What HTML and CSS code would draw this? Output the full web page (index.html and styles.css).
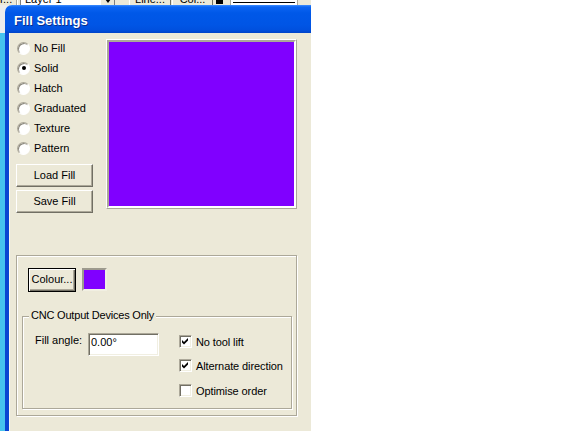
FILE: index.html
```html
<!DOCTYPE html>
<html>
<head>
<meta charset="utf-8">
<link rel="stylesheet" href="styles.css">
</head>
<body>
<div class="screen">
  <div class="toolbar">
    <span class="tb-item tb-lead">r...</span>
    <span class="tb-item tb-sep"></span>
    <div class="tb-item combo"><span class="combo-text">Layer 1</span><span class="combo-btn"><span class="arrow"></span></span></div>
    <div class="tb-item tb-btn tb-line-btn">Line...</div>
    <div class="tb-item tb-btn tb-col-btn">Col...</div>
    <span class="tb-swatch"></span>
    <div class="tb-item tb-field"><span class="tb-rule"></span></div>
  </div>
  <div class="desk">
    <div class="strip"></div>
    <div class="window">
      <div class="titlebar">Fill Settings</div>
      <div class="client">
        <div class="top">
          <div class="left-col">
            <div class="radios">
              <label class="radio"><span class="rb"></span>No Fill</label>
              <label class="radio"><span class="rb on"></span>Solid</label>
              <label class="radio"><span class="rb"></span>Hatch</label>
              <label class="radio"><span class="rb"></span>Graduated</label>
              <label class="radio"><span class="rb"></span>Texture</label>
              <label class="radio"><span class="rb"></span>Pattern</label>
            </div>
            <div class="btns">
              <div class="btn fill-btn">Load Fill</div>
              <div class="btn fill-btn">Save Fill</div>
            </div>
          </div>
          <div class="preview"><div class="preview-fill"></div></div>
        </div>
        <div class="group">
          <div class="colour-row">
            <div class="btn default colour-btn">Colour...</div>
            <div class="swatch"></div>
          </div>
          <div class="cnc">
            <span class="legend">CNC Output Devices Only</span>
            <div class="cnc-body">
              <div class="angle">
                <span class="angle-label">Fill angle:</span>
                <div class="textbox">0.00°</div>
              </div>
              <div class="checks">
                <label class="check"><span class="cb"><svg width="9" height="9" viewBox="0 0 9 9"><path d="M1 3 L3 5 L7 1 L7 3.4 L3 7.4 L1 5.4 Z" fill="#000"/></svg></span>No tool lift</label>
                <label class="check"><span class="cb"><svg width="9" height="9" viewBox="0 0 9 9"><path d="M1 3 L3 5 L7 1 L7 3.4 L3 7.4 L1 5.4 Z" fill="#000"/></svg></span>Alternate direction</label>
                <label class="check last"><span class="cb"></span>Optimise order</label>
              </div>
            </div>
          </div>
        </div>
      </div>
    </div>
  </div>
</div>
</body>
</html>
```

FILE: styles.css
```css
html, body {
  margin: 0;
  padding: 0;
  background: #fff;
}
body {
  font-family: "Liberation Sans", Arial, sans-serif;
  font-size: 11px;
  color: #000;
  width: 579px;
  height: 431px;
  overflow: hidden;
}
.screen {
  width: 311px;
  height: 431px;
  display: flex;
  flex-direction: column;
  background: #ececec;
}

/* toolbar strip at the very top */
.toolbar {
  height: 5px;
  flex: none;
  overflow: hidden;
  background: #ece9d8;
  display: flex;
  align-items: flex-end;
}
.tb-item {
  height: 20px;
  margin-bottom: -4px;
  line-height: 20px;
  flex: none;
  box-sizing: border-box;
}
.tb-lead {
  width: 14px;
  text-align: right;
  padding-right: 4px;
  white-space: nowrap;
  overflow: hidden;
}
.tb-sep {
  width: 2px;
  margin-left: 2px;
  margin-right: 2px;
  border-left: 1px solid #aca899;
  border-right: 1px solid #fff;
}
.combo {
  width: 95px;
  display: flex;
  border: 1px solid #7f7f7f;
  background: #fff;
  line-height: 18px;
}
.combo-text {
  flex: 1;
  padding-left: 4px;
}
.combo-btn {
  width: 14px;
  background: #ece9d8;
  border-left: 1px solid #fff;
  display: flex;
  justify-content: center;
  align-items: flex-end;
  padding-bottom: 5px;
  box-sizing: border-box;
}
.arrow {
  width: 0;
  height: 0;
  border-top: 4px solid #000;
  border-left: 3.5px solid transparent;
  border-right: 3.5px solid transparent;
}
.tb-btn {
  border: 1px solid;
  border-color: #fff #716f64 #716f64 #fff;
  text-align: center;
  line-height: 18px;
}
.tb-line-btn {
  width: 42px;
  margin-left: 14px;
}
.tb-col-btn {
  width: 41px;
  margin-left: 1px;
}
.tb-swatch {
  flex: none;
  width: 7px;
  height: 12px;
  margin-left: 3px;
  margin-bottom: 1px;
  background: #000;
}
.tb-field {
  width: 68px;
  margin-left: 7px;
  background: #fff;
  border: 1px solid #aca899;
  padding: 12px 2px 0 2px;
}
.tb-rule {
  display: block;
  height: 1px;
  background: #000;
}

/* desktop + window */
.desk {
  flex: 1;
  display: flex;
  min-height: 0;
}
.strip {
  width: 5px;
  flex: none;
  background: linear-gradient(#ececec 0, #ececec 28px, #46c2ee 28px, #46c2ee 100%);
}
.window {
  flex: 1;
  display: flex;
  flex-direction: column;
  min-width: 0;
  background: #ececec;
}
.titlebar {
  height: 28px;
  flex: none;
  box-sizing: border-box;
  padding: 3px 0 0 9px;
  line-height: 25px;
  border-top-left-radius: 7px;
  background: linear-gradient(to bottom, #3d8dff 0, #0b64f2 2px, #0058e8 8px, #0055e5 20px, #0050de 25px, #0043c8 28px);
  color: #fff;
  font-weight: bold;
  font-size: 13px;
  text-shadow: 1px 1px 0 #0a2f8c;
  white-space: nowrap;
}
.client {
  flex: 1;
  background: #ece9d8;
  border-left: 4px solid #0a44d2;
  box-shadow: inset 1px 0 0 #f7f6ef;
}

/* top section */
.top {
  display: flex;
  align-items: flex-start;
  padding: 5px 0 0 7px;
}
.left-col {
  width: 77px;
  flex: none;
}
.radio {
  display: flex;
  align-items: center;
  height: 20px;
  margin-left: 1px;
  gap: 4px;
  white-space: nowrap;
}
.rb {
  width: 13px;
  height: 13px;
  box-sizing: border-box;
  border-radius: 50%;
  background: #fff;
  border: 1px solid;
  border-color: #aca899 #fff #fff #aca899;
  box-shadow: inset 1px 1px 0 #8a877c;
  display: flex;
  align-items: center;
  justify-content: center;
  flex: none;
}
.rb.on::after {
  content: "";
  width: 4px;
  height: 4px;
  border-radius: 50%;
  background: #000;
}
.btns {
  margin-top: 6px;
  display: flex;
  flex-direction: column;
  gap: 3px;
}
.btn {
  box-sizing: border-box;
  background: #ece9d8;
  border: 1px solid;
  border-color: #fff #716f64 #716f64 #fff;
  box-shadow: inset -1px -1px 0 #aca899;
  text-align: center;
  white-space: nowrap;
}
.fill-btn {
  width: 77px;
  height: 23px;
  line-height: 20px;
}
.preview {
  margin: 1px 0 0 13px;
  width: 191px;
  height: 170px;
  box-sizing: border-box;
  border: 1px solid;
  border-color: #fff #aca899 #aca899 #fff;
  flex: none;
}
.preview-fill {
  width: 100%;
  height: 100%;
  box-sizing: border-box;
  border: 2px solid;
  border-color: #aca899 #fff #fff #aca899;
  background: #8000ff;
}

/* lower group */
.group {
  margin: 42px 0 0 7px;
  width: 281px;
  height: 161px;
  box-sizing: border-box;
  border: 1px solid #aca899;
  box-shadow: inset 1px 1px 0 #fff, 1px 1px 0 #fff;
}
.colour-row {
  display: flex;
  align-items: flex-start;
  padding: 12px 0 0 11px;
  gap: 6px;
}
.colour-btn {
  width: 48px;
  height: 24px;
  line-height: 20px;
}
.btn.default {
  border: 1px solid #000;
  box-shadow: inset 1px 1px 0 #fff, inset -1px -1px 0 #716f64, inset -2px -2px 0 #aca899;
}
.swatch {
  width: 25px;
  height: 23px;
  box-sizing: border-box;
  border: 2px solid;
  border-color: #9d9a8e #f1efe2 #f1efe2 #9d9a8e;
  background: #8000ff;
}
.cnc {
  position: relative;
  margin: 24px 4px 0 5px;
  height: 93px;
  box-sizing: border-box;
  border: 1px solid #aca899;
  box-shadow: inset 1px 1px 0 #fff, 1px 1px 0 #fff;
}
.legend {
  position: absolute;
  left: 6px;
  top: -8px;
  padding: 0 2px;
  line-height: 13px;
  letter-spacing: -0.2px;
  background: #ece9d8;
  white-space: nowrap;
}
.cnc-body {
  display: flex;
  align-items: flex-start;
  padding: 16px 0 0 12px;
}
.angle {
  display: flex;
  align-items: flex-start;
}
.angle-label {
  width: 53px;
  margin-top: 1px;
  line-height: 13px;
  white-space: nowrap;
}
.textbox {
  width: 71px;
  height: 23px;
  box-sizing: border-box;
  background: #fff;
  border: 1px solid;
  border-color: #aca899 #fff #fff #aca899;
  box-shadow: inset 1px 1px 0 #716f64, inset -1px -1px 0 #f1efe2;
  padding: 2px 0 0 2px;
  line-height: 13px;
}
.checks {
  margin-left: 20px;
  padding-top: 2px;
  display: flex;
  flex-direction: column;
  gap: 11px;
}
.check {
  display: flex;
  align-items: center;
  height: 13px;
  gap: 4px;
  white-space: nowrap;
  letter-spacing: -0.1px;
}
.check.last {
  margin-top: 1px;
}
.cb {
  width: 13px;
  height: 13px;
  box-sizing: border-box;
  flex: none;
  background: #fff;
  border: 1px solid;
  border-color: #aca899 #fff #fff #aca899;
  box-shadow: inset 1px 1px 0 #716f64, inset -1px -1px 0 #f1efe2;
  display: flex;
  align-items: center;
  justify-content: center;
}
.cb svg {
  display: block;
}
```
